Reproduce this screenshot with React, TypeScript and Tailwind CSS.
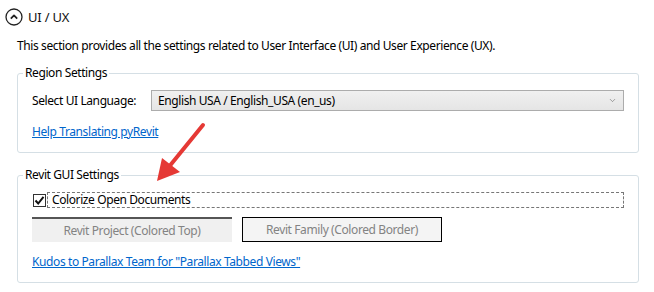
import { ChevronDown } from "lucide-react";

function ExpandIcon() {
  return (
    <svg width="18" height="18" viewBox="0 0 18 18">
      <circle cx="9" cy="9" r="8" fill="none" stroke="#222" strokeWidth="1.3" />
      <path d="M5.8 10.6 L9 7.4 L12.2 10.6" fill="none" stroke="#222" strokeWidth="1.8" strokeLinejoin="round" />
    </svg>
  );
}

function RedArrow() {
  return (
    <svg className="absolute left-[150px] top-[118px]" width="64" height="70" viewBox="0 0 64 70">
      <line x1="53" y1="7" x2="18" y2="50" stroke="#e53935" strokeWidth="4" strokeLinecap="round" />
      <polygon points="7,63 12,40 30,54" fill="#e53935" />
    </svg>
  );
}

export default function App() {
  return (
    <div
      className="relative w-[654px] h-[292px] bg-white text-[12px] text-black overflow-hidden tracking-[-0.4px]"
      style={{ fontFamily: '"Noto Sans", "Open Sans", sans-serif' }}
    >
      {/* header */}
      <div className="flex items-center gap-[5px] pl-[5px] pt-[8px] h-[26px]">
        <ExpandIcon />
        <span className="text-[13px] leading-none text-[#111] tracking-[-0.2px]">UI / UX</span>
      </div>

      <div className="pl-[17px] mt-[12px] leading-[16px]">
        This section provides all the settings related to User Interface (UI) and User Experience (UX).
      </div>

      {/* Region Settings */}
      <fieldset className="ml-[17px] mt-[11px] w-[622px] h-[88px] border border-[#d5dfe5] rounded-[3px] pl-[14px] pr-[14px]">
        <legend className="-ml-[9px] px-[2px] leading-[16px]">Region Settings</legend>
        <div className="flex items-center mt-[9px] h-[21px]">
          <span className="w-[119px]">Select UI Language:</span>
          <div className="flex-1 h-[21px] flex items-center justify-between border border-[#acacac] bg-gradient-to-b from-[#f0f0f0] to-[#e5e5e5] pl-[6px] pr-[6px]">
            <span>English USA / English_USA (en_us)</span>
            <ChevronDown size={9} strokeWidth={1.5} className="text-[#606060]" />
          </div>
        </div>
        <a className="block mt-[13px] w-fit text-[#0066cc] underline leading-[16px]" href="#">
          Help Translating pyRevit
        </a>
      </fieldset>

      {/* Revit GUI Settings */}
      <fieldset className="ml-[17px] mt-[14px] w-[622px] h-[116px] border border-[#d5dfe5] rounded-[3px] pl-[14px] pr-[14px]">
        <legend className="-ml-[9px] px-[2px] leading-[16px]">Revit GUI Settings</legend>
        <div className="flex items-center mt-[9px] h-[16px]">
          <div className="w-[13px] h-[13px] border border-[#333] bg-white flex items-center justify-center mr-[1px] ml-[1px]">
            <svg width="11" height="11" viewBox="0 0 11 11">
              <path d="M1.5 5.5 L4.2 8.5 L9.5 1.8" fill="none" stroke="#111" strokeWidth="2" />
            </svg>
          </div>
          <div className="flex-1 h-[16px] border border-dashed border-[#777] pl-[4px] leading-[14px]">
            Colorize Open Documents
          </div>
        </div>
        <div className="flex gap-[10px] mt-[9px]">
          <div className="w-[200px] h-[25px] bg-[#f0f0f0] border-t-2 border-[#555] flex items-center justify-center text-[#838383]">
            Revit Project (Colored Top)
          </div>
          <div className="w-[200px] h-[25px] bg-[#f4f4f4] border border-black flex items-center justify-center text-[#838383]">
            Revit Family (Colored Border)
          </div>
        </div>
        <a className="block mt-[12px] w-fit text-[#0066cc] underline leading-[16px]" href="#">
          Kudos to Parallax Team for "Parallax Tabbed Views"
        </a>
      </fieldset>

      <RedArrow />
    </div>
  );
}
